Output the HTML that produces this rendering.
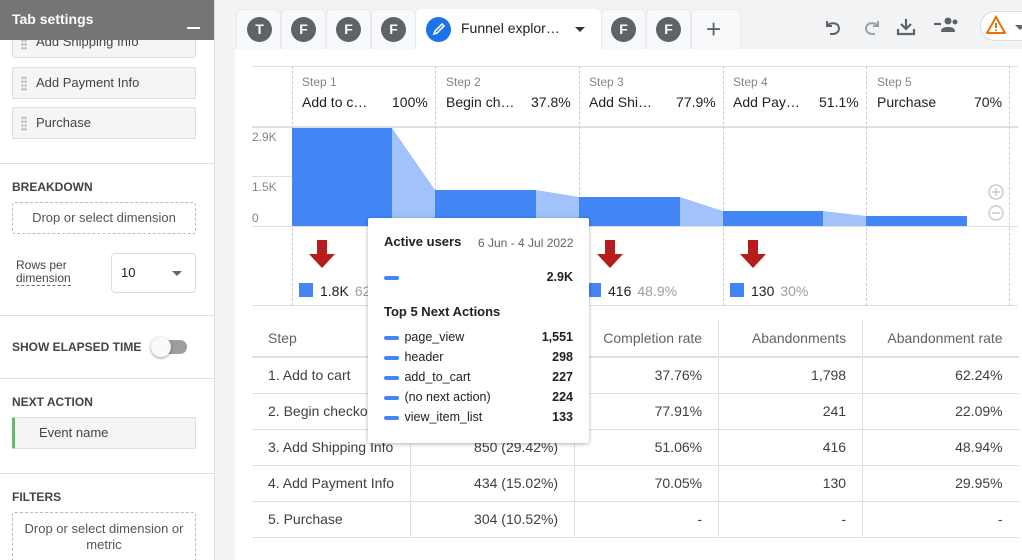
<!DOCTYPE html>
<html style="width:1022px;height:560px;overflow:hidden"><head><meta charset="utf-8"><style>
*{box-sizing:border-box;margin:0;padding:0}
body{width:1022px;height:560px;overflow:hidden;position:relative;background:#f1f3f4;font-family:"Liberation Sans",sans-serif;color:#202124}
.a{position:absolute}
.side{left:0;top:0;width:215px;height:560px;background:#fff;border-right:1px solid #dadce0;overflow:hidden}
.chip{position:absolute;left:12px;width:184px;height:32px;background:#f5f5f5;border:1px solid #e0e0e0;border-radius:2px;font-size:13px;color:#444;line-height:30px;padding-left:23px}
.chip i{position:absolute;left:8px;top:8px;width:6px;height:15px;background:radial-gradient(circle,#bbb 1.2px,transparent 1.4px) 0 0/3px 3.8px}
.hd{position:absolute;left:12px;font-size:12px;color:#444;font-weight:bold;letter-spacing:0}
.div{position:absolute;left:0;width:215px;height:1px;background:#e0e0e0}
.dash{position:absolute;left:12px;width:184px;border:1px dashed #bbb;border-radius:3px;font-size:13px;color:#555;text-align:center}
.tab{position:absolute;top:9px;height:40px;background:#f8f9fa;border:1px solid #e8eaed;border-bottom:none;border-radius:6px 6px 0 0}
.av{position:absolute;top:17px;width:25px;height:25px;border-radius:50%;background:#5f6368;color:#fff;font-weight:bold;font-size:14px;text-align:center;line-height:25px}
.main{left:235px;top:49px;width:787px;height:511px;background:#fff}
.vl{position:absolute;top:66px;height:240px;border-left:1px dashed #ccc}
.sh{position:absolute;top:75px;font-size:12px;color:#80868b}
.sn{position:absolute;top:94px;font-size:14px;color:#202124}
.arr{position:absolute;top:240px;width:28px;height:28px}
.lg{position:absolute;top:283px;width:14px;height:14px;background:#4285f4}
.lt{position:absolute;top:283px;font-size:14px;color:#202124}
.lt span{color:#9aa0a6;margin-left:6px}
table{position:absolute;left:252px;top:320px;border-collapse:collapse;font-size:14px;color:#3c4043;table-layout:fixed}
td{height:36px;border-bottom:1px solid #e0e0e0;border-left:1px solid #e0e0e0;text-align:right;padding:0 16px;white-space:nowrap;overflow:hidden}
td:first-child{border-left:none;text-align:left;padding-left:16px}
tr:first-child td{height:37px;color:#5f6368;border-bottom:2px solid #e0e0e0}
.tip{left:368px;top:218px;width:221px;height:225px;background:#fff;box-shadow:0 1px 4px rgba(0,0,0,.3);border-radius:2px;font-size:12.5px}
.tip .r{position:absolute;left:16px;width:189px}
.tip .r b{position:absolute;right:0}
.tip .r i{display:inline-block;width:15px;height:4px;border-radius:2px;background:#4285f4;margin-right:2px;vertical-align:middle}
</style></head><body>
<div class="a side">
 <div class="chip" style="top:26px"><i></i>Add Shipping Info</div>
 <div class="chip" style="top:67px"><i></i>Add Payment Info</div>
 <div class="chip" style="top:107px"><i></i>Purchase</div>
 <div class="a" style="left:0;top:0;width:215px;height:40px;background:#757575;color:#fff;font-weight:bold;font-size:14px;padding:11px 12px">Tab settings<div class="a" style="left:187px;top:27px;width:13px;height:2px;background:#fff"></div></div>
 <div class="div" style="top:163px"></div>
 <div class="hd" style="top:180px">BREAKDOWN</div>
 <div class="dash" style="top:202px;height:32px;line-height:30px">Drop or select dimension</div>
 <div class="a" style="left:16px;top:259px;font-size:12px;color:#444;line-height:13px">Rows per<br><span style="border-bottom:1px dashed #666">dimension</span></div>
 <div class="a" style="left:111px;top:253px;width:85px;height:40px;border:1px solid #dadce0;border-radius:4px;font-size:13px;padding:11px 9px">10<div class="a" style="left:60px;top:17px;border:5px solid transparent;border-top-color:#666"></div></div>
 <div class="div" style="top:315px"></div>
 <div class="hd" style="top:340px">SHOW ELAPSED TIME</div>
 <div class="a" style="left:154px;top:340px;width:33px;height:14px;border-radius:7px;background:#9e9e9e"></div>
 <div class="a" style="left:151px;top:337px;width:20px;height:20px;border-radius:50%;background:#fafafa;box-shadow:0 1px 3px rgba(0,0,0,.4)"></div>
 <div class="div" style="top:378px"></div>
 <div class="hd" style="top:395px">NEXT ACTION</div>
 <div class="chip" style="top:417px;border-left:3px solid #66bb6a;padding-left:24px">Event name</div>
 <div class="div" style="top:473px"></div>
 <div class="hd" style="top:490px">FILTERS</div>
 <div class="dash" style="top:512px;height:50px;padding-top:8px;line-height:16px">Drop or select dimension or<br>metric</div>
</div>

<div class="tab" style="left:236px;width:45px"></div>
<div class="tab" style="left:281px;width:45px"></div>
<div class="tab" style="left:326px;width:45px"></div>
<div class="tab" style="left:371px;width:45px"></div>
<div class="tab" style="left:416px;width:185px;background:#fff;height:41px;border-color:#fff"></div>
<div class="tab" style="left:601px;width:45px"></div>
<div class="tab" style="left:646px;width:45px"></div>
<div class="tab" style="left:691px;width:50px"></div>
<div class="av" style="left:247px">T</div>
<div class="av" style="left:291px">F</div>
<div class="av" style="left:336px">F</div>
<div class="av" style="left:381px">F</div>
<div class="av" style="left:611px">F</div>
<div class="av" style="left:656px">F</div>
<div class="av" style="left:426px;background:#1a73e8"><svg width="25" height="25" viewBox="0 0 25 25"><path d="M8 17l1-3 7-7 2 2-7 7z" fill="none" stroke="#fff" stroke-width="1.6"/></svg></div>
<div class="a" style="left:461px;top:20px;font-size:14px">Funnel explor…</div>
<div class="a" style="left:575px;top:27px;border:5px solid transparent;border-top-color:#333"></div>
<div class="a" style="left:706px;top:15px;font-size:26px;color:#5f6368;line-height:28px">+</div>
<svg class="a" style="left:822px;top:16px" width="140" height="24" viewBox="0 0 140 24">
<path d="M5 5v5h5M5 10c3-4 11-4 12 2 0 4-3 6-6 6H8" fill="none" stroke="#5f6368" stroke-width="2"/>
<path d="M56 5v5h-5M56 10c-3-4-11-4-12 2 0 4 3 6 6 6h3" fill="none" stroke="#9aa0a6" stroke-width="2"/>
<path d="M84 3v10M79 8l5 5 5-5M76 13v5h16v-5" fill="none" stroke="#5f6368" stroke-width="2.2"/>
<path d="M112 8h7" stroke="#5f6368" stroke-width="2.2"/><circle cx="126" cy="5" r="3.5" fill="#5f6368"/><path d="M119 16c0-4 3-5 7-5s7 1 7 5z" fill="#5f6368"/><circle cx="133" cy="6" r="2.5" fill="#5f6368"/>
</svg>
<div class="a" style="left:980px;top:11px;width:60px;height:30px;border:1px solid #dadce0;border-radius:15px;background:#fff"></div>
<svg class="a" style="left:986px;top:15px" width="20" height="20" viewBox="0 0 20 20"><path d="M10 2L1 18h18z" fill="none" stroke="#e8710a" stroke-width="2"/><path d="M10 8v5M10 14.5v1.5" stroke="#e8710a" stroke-width="2"/></svg>
<div class="a" style="left:1015px;top:25px;border:5px solid transparent;border-top-color:#666"></div>

<div class="a main"></div>
<div class="a" style="left:252px;top:66px;width:766px;height:1px;background:#e0e0e0"></div>
<div class="a" style="left:252px;top:126px;width:766px;height:2px;background:#e0e0e0"></div>
<div class="a" style="left:252px;top:176px;width:40px;height:1px;background:#e0e0e0"></div>
<div class="a" style="left:252px;top:226px;width:766px;height:1px;background:#e0e0e0"></div>
<div class="a" style="left:252px;top:305px;width:766px;height:1px;background:#e0e0e0"></div>
<div class="vl" style="left:292px"></div><div class="vl" style="left:435px"></div><div class="vl" style="left:579px"></div><div class="vl" style="left:723px"></div><div class="vl" style="left:866px"></div><div class="vl" style="left:1009px"></div>
<div class="a" style="left:252px;top:130px;font-size:12px;color:#80868b">2.9K</div>
<div class="a" style="left:252px;top:180px;font-size:12px;color:#80868b">1.5K</div>
<div class="a" style="left:252px;top:211px;font-size:12px;color:#80868b">0</div>
<div class="sh" style="left:302px">Step 1</div><div class="sn" style="left:302px">Add to c…</div><div class="sn" style="left:392px">100%</div>
<div class="sh" style="left:446px">Step 2</div><div class="sn" style="left:446px">Begin ch…</div><div class="sn" style="left:531px">37.8%</div>
<div class="sh" style="left:589px">Step 3</div><div class="sn" style="left:589px">Add Shi…</div><div class="sn" style="left:676px">77.9%</div>
<div class="sh" style="left:733px">Step 4</div><div class="sn" style="left:733px">Add Pay…</div><div class="sn" style="left:819px">51.1%</div>
<div class="sh" style="left:877px">Step 5</div><div class="sn" style="left:877px">Purchase</div><div class="sn" style="left:974px">70%</div>
<svg class="a" style="left:0;top:0" width="1022" height="230">
<rect x="292" y="128" width="100" height="98" fill="#4285f4"/><path d="M392 128L435 190V226H392z" fill="#a1c2fa"/>
<rect x="435" y="190" width="101" height="36" fill="#4285f4"/><path d="M536 190L579 197V226H536z" fill="#a1c2fa"/>
<rect x="579" y="197" width="101" height="29" fill="#4285f4"/><path d="M680 197L723 211V226H680z" fill="#a1c2fa"/>
<rect x="723" y="211" width="100" height="15" fill="#4285f4"/><path d="M823 211L866 216V226H823z" fill="#a1c2fa"/>
<rect x="866" y="216" width="101" height="10" fill="#4285f4"/>
<circle cx="996" cy="192" r="7" fill="none" stroke="#ccc" stroke-width="1.5"/><path d="M992 192h8M996 188v8" stroke="#ccc" stroke-width="1.5"/>
<circle cx="996" cy="213" r="7" fill="none" stroke="#ccc" stroke-width="1.5"/><path d="M992 213h8" stroke="#ccc" stroke-width="1.5"/>
</svg>
<svg class="arr" style="left:308px" viewBox="0 0 28 28"><path d="M9 0h10v14h8L14 28 1 14h8z" fill="#b71c1c"/></svg>
<svg class="arr" style="left:596px" viewBox="0 0 28 28"><path d="M9 0h10v14h8L14 28 1 14h8z" fill="#b71c1c"/></svg>
<svg class="arr" style="left:739px" viewBox="0 0 28 28"><path d="M9 0h10v14h8L14 28 1 14h8z" fill="#b71c1c"/></svg>
<div class="lg" style="left:299px"></div><div class="lt" style="left:320px">1.8K<span>62.2%</span></div>
<div class="lg" style="left:587px"></div><div class="lt" style="left:608px">416<span>48.9%</span></div>
<div class="lg" style="left:730px"></div><div class="lt" style="left:751px">130<span>30%</span></div>

<table>
<colgroup><col style="width:158px"><col style="width:164px"><col style="width:144px"><col style="width:144px"><col style="width:156px"></colgroup>
<tr><td>Step</td><td style="color:#ccc">Users (% of Step 1)</td><td>Completion rate</td><td>Abandonments</td><td>Abandonment rate</td></tr>
<tr><td>1. Add to cart</td><td>2,889 (100%)</td><td>37.76%</td><td>1,798</td><td>62.24%</td></tr>
<tr><td>2. Begin checkout</td><td>1,091 (37.76%)</td><td>77.91%</td><td>241</td><td>22.09%</td></tr>
<tr><td>3. Add Shipping Info</td><td>850 (29.42%)</td><td>51.06%</td><td>416</td><td>48.94%</td></tr>
<tr><td>4. Add Payment Info</td><td>434 (15.02%)</td><td>70.05%</td><td>130</td><td>29.95%</td></tr>
<tr><td>5. Purchase</td><td>304 (10.52%)</td><td>-</td><td>-</td><td>-</td></tr>
</table>

<div class="a tip">
 <div class="a" style="left:16px;top:16px;font-size:13px;font-weight:bold">Active users</div>
 <div class="a" style="left:110px;top:18px;font-size:12px;color:#5f6368">6 Jun - 4 Jul 2022</div>
 <div class="r" style="top:52px"><i></i><b>2.9K</b></div>
 <div class="a" style="left:16px;top:86px;font-size:13px;font-weight:bold">Top 5 Next Actions</div>
 <div class="r" style="top:112px"><i></i> page_view<b>1,551</b></div>
 <div class="r" style="top:132px"><i></i> header<b>298</b></div>
 <div class="r" style="top:152px"><i></i> add_to_cart<b>227</b></div>
 <div class="r" style="top:172px"><i></i> (no next action)<b>224</b></div>
 <div class="r" style="top:192px"><i></i> view_item_list<b>133</b></div>
</div>
</body></html>
